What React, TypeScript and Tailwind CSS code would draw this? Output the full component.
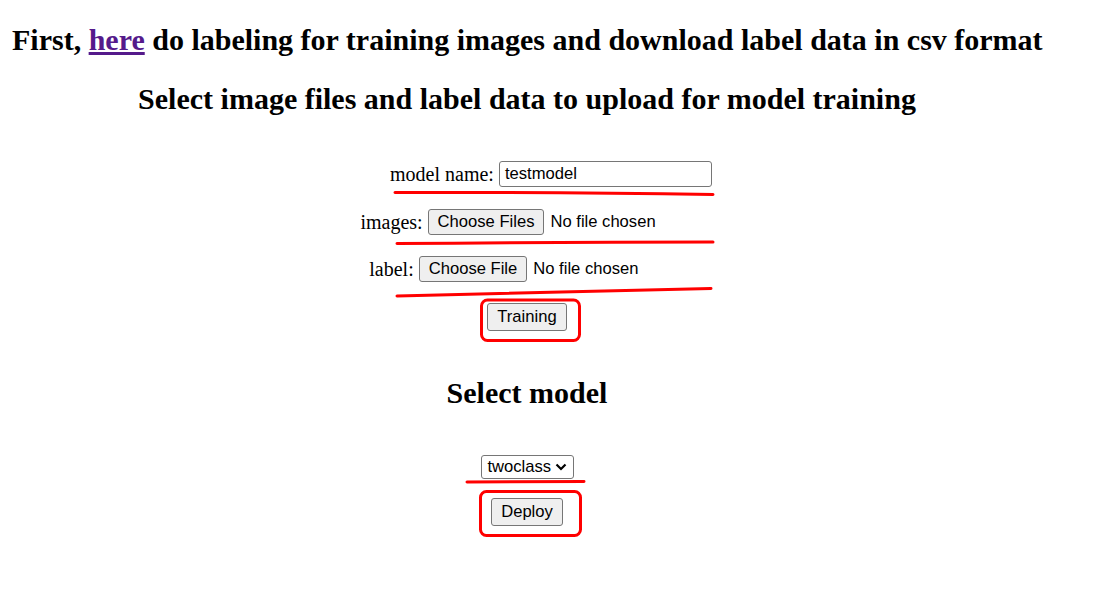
import React from 'react';

const serif = { fontFamily: '"Liberation Serif", "Times New Roman", serif' };
const sans = { fontFamily: '"Liberation Sans", Arial, sans-serif' };

function FileInput({ label, multiple }: { label: string; multiple?: boolean }) {
  return (
    <div className="flex w-[266px] items-center">
      <span
        style={sans}
        className="h-[26px] px-[9px] flex items-center bg-[#efefef] border border-[#767676] rounded-[3px] text-[16.6px] text-black"
      >
        {multiple ? 'Choose Files' : 'Choose File'}
      </span>
      <span style={sans} className="ml-[6px] text-[16.6px] text-black">
        No file chosen
      </span>
      <span className="hidden">{label}</span>
    </div>
  );
}

function Btn({ children }: { children: React.ReactNode }) {
  return (
    <button
      style={sans}
      className="h-[28px] px-[9px] bg-[#efefef] border border-[#767676] rounded-[3px] text-[16.6px] text-black"
    >
      {children}
    </button>
  );
}

function Annotations() {
  return (
    <svg className="absolute left-0 top-0 pointer-events-none" width="1093" height="611" viewBox="0 0 1093 611">
      <g fill="none" stroke="#ff0000" strokeWidth="3" strokeLinecap="round">
        <path d="M395 192.5 Q 560 192 713 194.5" />
        <path d="M397 243.5 Q 560 242 713 242" />
        <path d="M397 296 Q 560 292 711 288.5" />
        <rect x="481.5" y="300" width="98" height="40.5" rx="6" />
        <path d="M467 482 L 584 481.5" />
        <rect x="480.5" y="491.5" width="100" height="44" rx="6" />
      </g>
    </svg>
  );
}

export default function App() {
  return (
    <div style={serif} className="relative w-[1093px] h-[611px] bg-white text-black overflow-hidden">
      <div className="ml-[10px] w-[1034px]">
        <h2 className="mt-[23px] pl-[2px] text-[30px] leading-[34px] font-bold">
          First,{' '}
          <a href="#" className="text-[#551a8b] underline">
            here
          </a>{' '}
          do labeling for training images and download label data in csv format
        </h2>
        <h2 className="mt-[25px] text-center text-[30px] leading-[34px] font-bold">
          Select image files and label data to upload for model training
        </h2>

        <div className="mt-[45px] flex flex-col items-center">
          <div className="flex items-center h-[26px] ml-[48px]">
            <span className="text-[20px] mr-[5px]">model name:</span>
            <span
              style={sans}
              className="w-[213px] h-[26px] px-[5px] flex items-center border border-[#767676] rounded-[3px] text-[16.6px]"
            >
              testmodel
            </span>
          </div>

          <div className="mt-[22px] flex items-center h-[26px]">
            <span className="text-[20px] mr-[5px]">images:</span>
            <FileInput label="images" multiple />
          </div>

          <div className="mt-[21px] flex items-center h-[26px]">
            <span className="text-[20px] mr-[5px]">label:</span>
            <FileInput label="label" />
          </div>

          <div className="mt-[21px]">
            <Btn>Training</Btn>
          </div>
        </div>

        <h2 className="mt-[45px] text-center text-[30px] leading-[34px] font-bold">Select model</h2>

        <div className="mt-[45px] flex flex-col items-center">
          <div
            style={sans}
            className="w-[93px] h-[24px] pl-[6px] pr-[6px] flex items-center justify-between border border-[#767676] rounded-[3px] text-[16.6px]"
          >
            <span>twoclass</span>
            <svg width="12" height="8" viewBox="0 0 12 8">
              <path d="M1.5 1.5 L6 6 L10.5 1.5" fill="none" stroke="#000" strokeWidth="2.2" />
            </svg>
          </div>
          <div className="mt-[19px]">
            <Btn>Deploy</Btn>
          </div>
        </div>
      </div>
      <Annotations />
    </div>
  );
}
